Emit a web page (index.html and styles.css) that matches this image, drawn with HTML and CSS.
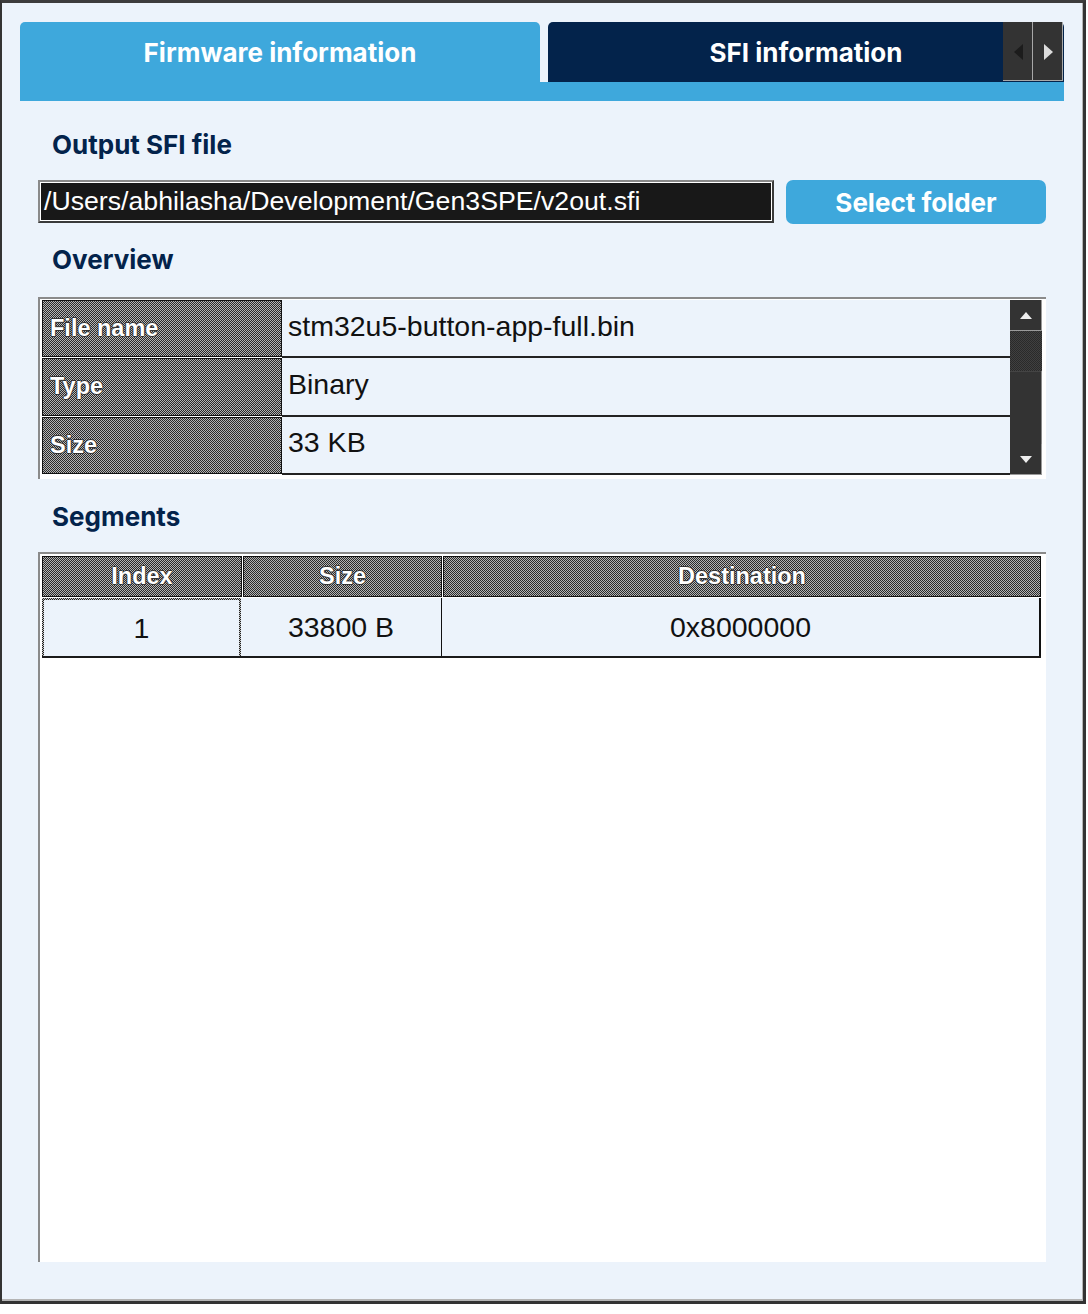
FILE: index.html
```html
<!DOCTYPE html>
<html lang="en">
<head>
    <meta charset="UTF-8">
    <meta name="viewport" content="width=device-width, initial-scale=1.0">
    <title>SFI Generator</title>
    <link rel="stylesheet" href="styles.css">
</head>
<body>
    <div class="frame">
        <div class="tabs">
            <div class="tab tab-active">Firmware information</div>
            <div class="tab tab-dark">SFI information</div>
            <div class="tab-scroll">
                <span class="tab-scroll-btn">
                    <svg width="9" height="16" viewBox="0 0 9 16"><polygon points="9,0 0,8 9,16" fill="#1c1c1c"/></svg>
                </span>
                <span class="tab-scroll-btn">
                    <svg width="9" height="16" viewBox="0 0 9 16"><polygon points="0,0 9,8 0,16" fill="#dcdcdc"/></svg>
                </span>
            </div>
        </div>
        <div class="tab-strip"></div>

        <div class="panel">
            <h2 class="section-title first">Output SFI file</h2>
            <div class="output-row">
                <div class="path-field">/Users/abhilasha/Development/Gen3SPE/v2out.sfi</div>
                <button class="select-btn">Select folder</button>
            </div>

            <h2 class="section-title">Overview</h2>
            <div class="overview">
                <div class="ov-rows">
                    <div class="ov-row">
                        <div class="ov-label">File name</div>
                        <div class="ov-value">stm32u5-button-app-full.bin</div>
                    </div>
                    <div class="ov-row">
                        <div class="ov-label">Type</div>
                        <div class="ov-value">Binary</div>
                    </div>
                    <div class="ov-row">
                        <div class="ov-label">Size</div>
                        <div class="ov-value">33 KB</div>
                    </div>
                </div>
                <div class="vscroll">
                    <div class="vs-btn">
                        <svg width="12" height="7" viewBox="0 0 12 7"><polygon points="0,7 6,0 12,7" fill="#eeeeee"/></svg>
                    </div>
                    <div class="vs-thumb"></div>
                    <div class="vs-track"></div>
                    <div class="vs-btn">
                        <svg width="12" height="7" viewBox="0 0 12 7"><polygon points="0,0 12,0 6,7" fill="#eeeeee"/></svg>
                    </div>
                </div>
            </div>

            <h2 class="section-title seg-title">Segments</h2>
            <div class="segments">
                <div class="seg-head">
                    <div class="seg-th col-index">Index</div>
                    <div class="seg-th col-size">Size</div>
                    <div class="seg-th col-dest">Destination</div>
                </div>
                <div class="seg-row">
                    <div class="seg-td col-index focused">1</div>
                    <div class="seg-td col-size">33800 B</div>
                    <div class="seg-td col-dest">0x8000000</div>
                </div>
            </div>
        </div>
    </div>
</body>
</html>
```

FILE: styles.css
```css
/* Page frame */
body {
    margin: 0;
    background-color: #fff;
    font-family: "Liberation Sans", Arial, sans-serif;
}

.frame {
    width: 1086px;
    height: 1304px;
    box-sizing: border-box;
    background-color: #ecf3fb;
    border-style: solid;
    border-width: 3px 3px 3px 2px;
    border-color: #3c3c3c #333 #333 #333;
    box-shadow: inset -1px -2px 0 #b4b4b4;
    padding: 19px 19px 0 18px;
}

/* Tabs */
.tabs {
    position: relative;
    display: flex;
    gap: 8px;
    height: 60px;
}

.tab {
    display: flex;
    align-items: center;
    justify-content: center;
    border-radius: 5px 5px 0 0;
    font-family: Inter, "Noto Sans", sans-serif;
    font-weight: 700;
    font-size: 26px;
    color: #fff;
}

.tab-active {
    width: 520px;
    background-color: #3ea8dc;
}

.tab-dark {
    flex: 1;
    background-color: #03234b;
}

.tab-scroll {
    position: absolute;
    top: 0;
    right: 1px;
    display: flex;
    height: 59px;
    background-color: #333;
}

.tab-scroll-btn {
    width: 30px;
    display: flex;
    align-items: center;
    justify-content: center;
    box-shadow: inset -1px -1px 0 #a8a8a8;
}

.tab-strip {
    height: 19px;
    background-color: #3ea8dc;
}

/* Panel */
.panel {
    padding: 0 18px;
}

.section-title {
    margin: 0;
    padding: 16px 0 0 14px;
    height: 40px;
    line-height: 40px;
    font-family: Inter, "Noto Sans", sans-serif;
    font-weight: 700;
    font-size: 26px;
    color: #03234b;
}

.section-title.first {
    padding-top: 24px;
}

.section-title.seg-title {
    padding-top: 18px;
}

.output-row {
    display: flex;
    gap: 12px;
    margin-top: 15px;
}

.path-field {
    width: 736px;
    height: 43px;
    box-sizing: border-box;
    background-color: #181818;
    border: 2px solid;
    border-color: #8a8a8a #3a3a3a #3a3a3a #8a8a8a;
    box-shadow: inset 1px 1px 0 #fff, inset -1px -1px 0 #fff;
    padding-left: 4px;
    line-height: 39px;
    color: #fff;
    font-size: 26.7px;
    white-space: nowrap;
    overflow: hidden;
}

.select-btn {
    flex: 1;
    height: 44px;
    border: none;
    border-radius: 7px;
    background-color: #3ea8dc;
    color: #fff;
    font-family: Inter, "Noto Sans", sans-serif;
    font-weight: 700;
    font-size: 26px;
    cursor: pointer;
}

/* dithered header cells */
.ov-label,
.seg-th {
    background: repeating-conic-gradient(#2a2a2a 0 25%, #b4b4b4 0 50%) 0 0 / 2px 2px;
    border: 1px solid #111;
    box-sizing: border-box;
    color: #fff;
    font-weight: 700;
    font-size: 23.5px;
    text-shadow: -1px 0 #333, 1px 0 #333, 0 -1px #333, 0 1px #333;
}

/* Overview table */
.overview {
    display: flex;
    height: 182px;
    box-sizing: border-box;
    margin-top: 17px;
    border-top: 2px solid #8a8a8a;
    border-left: 2px solid #8a8a8a;
    background-color: #fff;
    padding: 1px 4px 4px 2px;
}

.ov-rows {
    flex: 1;
    display: flex;
    flex-direction: column;
}

.ov-row {
    flex: 1;
    display: flex;
}

.ov-label {
    width: 240px;
    margin-bottom: 1px;
    display: flex;
    align-items: center;
    padding-left: 7px;
}

.ov-value {
    flex: 1;
    display: flex;
    align-items: center;
    padding: 0 0 4px 6px;
    background-color: #ecf3fb;
    border-bottom: 2px solid #222;
    font-size: 28.5px;
    color: #111;
}

.vscroll {
    width: 32px;
    display: flex;
    flex-direction: column;
    background-color: #333;
}

.vs-btn {
    height: 31px;
    display: flex;
    align-items: center;
    justify-content: center;
    box-shadow: inset -1px -1px 0 #9a9a9a;
}

.vs-thumb {
    height: 40px;
    background: repeating-conic-gradient(#2a2a2a 0 25%, #404040 0 50%) 0 0 / 2px 2px;
}

.vs-track {
    flex: 1;
    box-shadow: inset -1px 0 0 #8a8a8a, inset 0 1px 0 #444;
}

/* Segments table */
.segments {
    height: 710px;
    box-sizing: border-box;
    margin-top: 15px;
    border-top: 2px solid #8a8a8a;
    border-left: 2px solid #8a8a8a;
    background-color: #fff;
    padding: 2px 5px 0 2px;
}

.seg-head {
    display: flex;
    gap: 1px;
    height: 42px;
}

.seg-th {
    display: flex;
    align-items: center;
    justify-content: center;
    height: 41px;
}

.seg-head .col-index {
    width: 200px;
}

.seg-head .col-size {
    width: 199px;
}

.seg-head .col-dest {
    flex: 1;
}

.seg-row {
    display: flex;
    height: 60px;
    box-sizing: border-box;
    border-bottom: 2px solid #1a1a1a;
}

.seg-td {
    display: flex;
    align-items: center;
    justify-content: center;
    box-sizing: border-box;
    background-color: #ecf3fb;
    font-size: 28.5px;
    color: #111;
}

.seg-row .col-index {
    width: 199px;
}

.seg-td.focused {
    border: 2px solid transparent;
    border-bottom: none;
    background: linear-gradient(#ecf3fb, #ecf3fb) padding-box,
        repeating-conic-gradient(#1e1e1e 0 25%, #c4c4c4 0 50%) 0 0 / 2px 2px border-box;
}

.seg-row .col-size {
    width: 201px;
    border-right: 1px solid #111;
}

.seg-row .col-dest {
    flex: 1;
    border-right: 2px solid #111;
}
```
